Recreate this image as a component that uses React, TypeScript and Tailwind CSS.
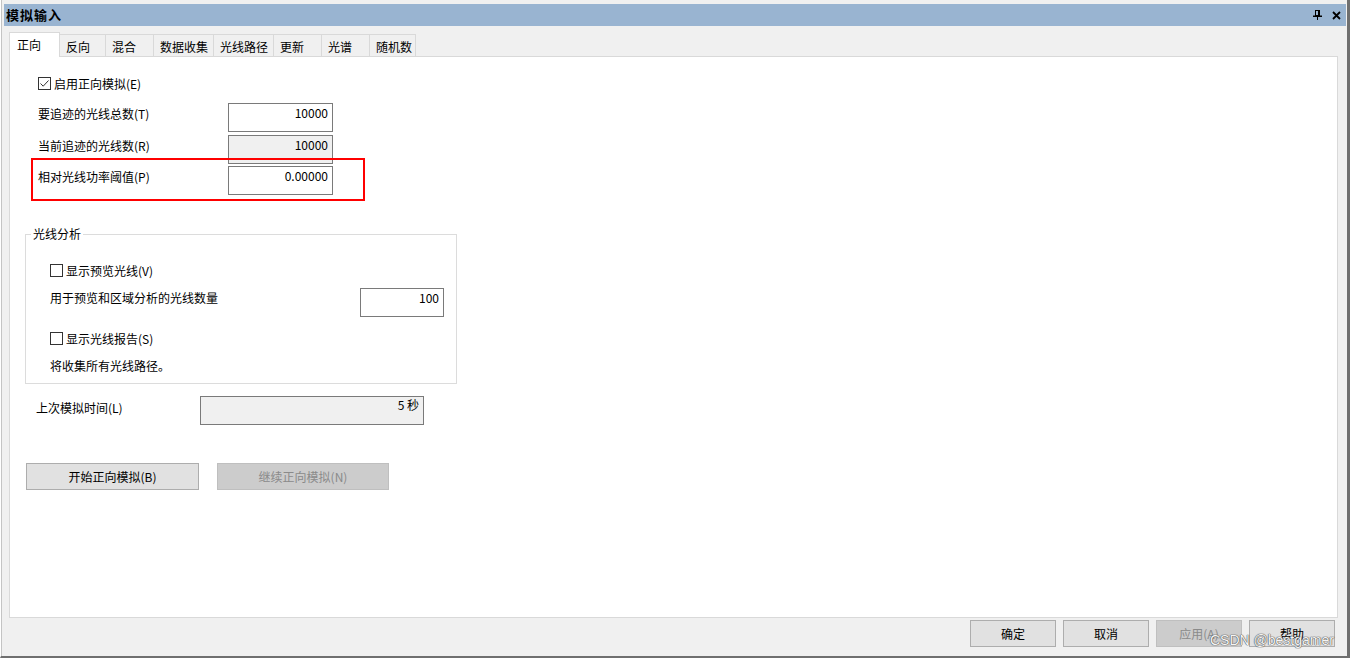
import React from 'react';

const tabs = [
  { label: '正向', w: 'w-[51px]' },
  { label: '反向', w: 'w-[46px]' },
  { label: '混合', w: 'w-[48px]' },
  { label: '数据收集', w: 'w-[60px]' },
  { label: '光线路径', w: 'w-[60px]' },
  { label: '更新', w: 'w-[48px]' },
  { label: '光谱', w: 'w-[48px]' },
  { label: '随机数', w: 'w-[46px]' },
];

function CheckBox({ checked = false }: { checked?: boolean }) {
  return (
    <span className="flex h-[13px] w-[13px] shrink-0 items-center justify-center border border-[#333333] bg-white">
      {checked && (
        <svg width="11" height="11" viewBox="0 0 11 11">
          <path d="M1.5 5.5 L4.2 8.2 L9.5 2.5" fill="none" stroke="#333333" strokeWidth="1" />
        </svg>
      )}
    </span>
  );
}

function NumBox({ value, w, readOnly = false }: { value: string; w: string; readOnly?: boolean }) {
  return (
    <div
      className={`${w} h-[29px] border border-[#7a7a7a] pr-[4px] pt-[1px] text-right leading-[16px] ${
        readOnly ? 'bg-[#f0f0f0]' : 'bg-white'
      }`}
    >
      {value}
    </div>
  );
}

function Row({ label, value, readOnly, className = '' }: { label: string; value: string; readOnly?: boolean; className?: string }) {
  return (
    <div className={`flex h-[29px] ${className}`}>
      <div className="w-[190px] pt-[3px] leading-[16px]">{label}</div>
      <NumBox value={value} w="w-[105px]" readOnly={readOnly} />
    </div>
  );
}

function PinIcon() {
  return (
    <svg width="10" height="10" viewBox="0 0 10 10">
      <rect x="2.5" y="0.5" width="4" height="5" fill="none" stroke="#000" strokeWidth="1" />
      <rect x="5" y="0" width="1.5" height="6" fill="#000" />
      <rect x="0" y="5.5" width="9" height="1.5" fill="#000" />
      <rect x="4" y="6.5" width="1" height="3.5" fill="#000" />
    </svg>
  );
}

function CloseIcon() {
  return (
    <svg width="9" height="9" viewBox="0 0 9 9">
      <path d="M1 1 L8 8 M8 1 L1 8" stroke="#000" strokeWidth="1.8" />
    </svg>
  );
}

export default function App() {
  return (
    <div className="relative h-[658px] w-[1350px] overflow-hidden border-b-2 border-l border-r-[3px] border-b-[#6f6f6f] border-l-white border-r-[#6f6f6f] bg-[#f0f0f0] font-['Noto_Sans_CJK_SC','Noto_Sans',sans-serif] text-[12px] text-black">
      <div className="flex h-full flex-col border-l border-[#c4c4c4] pt-[4px]">
        {/* title bar */}
        <div className="ml-[2px] mr-[1px] flex h-[22px] items-center justify-between bg-[#99b4d1] pl-[2px] pr-[5px]">
          <span className="text-[13px] font-bold tracking-[1px] leading-[16px]">模拟输入</span>
          <div className="flex items-center gap-[9px]">
            <PinIcon />
            <CloseIcon />
          </div>
        </div>

        {/* tabs */}
        <div className="mt-[6px] flex h-[25px] items-end pl-[7px]">
          {tabs.map((t, i) =>
            i === 0 ? (
              <div
                key={t.label}
                className={`${t.w} relative z-10 h-[25px] border border-b-0 border-[#d9d9d9] bg-white pl-[7px] pt-[4px] leading-[16px]`}
              >
                {t.label}
              </div>
            ) : (
              <div
                key={t.label}
                className={`${t.w} h-[23px] border-r border-t border-[#d9d9d9] bg-[#f0f0f0] pl-[6px] pt-[4px] leading-[16px]`}
              >
                {t.label}
              </div>
            )
          )}
        </div>

        {/* panel */}
        <div className="relative -mt-px ml-[7px] flex h-[562px] w-[1329px] flex-col border border-[#d9d9d9] bg-white">
          <div className="ml-[28px] mt-[20px] flex h-[13px] items-center gap-[3px]">
            <CheckBox checked />
            <span className="leading-[16px]">启用正向模拟(E)</span>
          </div>

          <div className="ml-[28px] mt-[13px] flex flex-col">
            <Row label="要追迹的光线总数(T)" value="10000" />
            <Row label="当前追迹的光线数(R)" value="10000" readOnly className="mt-[3px]" />
            <Row label="相对光线功率阈值(P)" value="0.00000" className="mt-[2px]" />
          </div>

          <fieldset className="ml-[15px] mt-[31px] h-[158px] w-[432px] border border-[#dcdcdc]">
            <legend className="ml-[5px] px-[2px] leading-[16px]">光线分析</legend>
            <div className="pl-[24px]">
              <div className="mt-[22px] flex h-[13px] items-center gap-[3px]">
                <CheckBox />
                <span className="leading-[16px]">显示预览光线(V)</span>
              </div>
              <div className="mt-[11px] flex h-[29px]">
                <div className="w-[310px] pt-[2px] leading-[16px]">用于预览和区域分析的光线数量</div>
                <NumBox value="100" w="w-[84px]" />
              </div>
              <div className="mt-[15px] flex h-[13px] items-center gap-[3px]">
                <CheckBox />
                <span className="leading-[16px]">显示光线报告(S)</span>
              </div>
              <div className="mt-[13px] leading-[16px]">将收集所有光线路径。</div>
            </div>
          </fieldset>

          <div className="ml-[26px] mt-[12px] flex h-[29px]">
            <div className="w-[164px] pt-[4px] leading-[16px]">上次模拟时间(L)</div>
            <div className="h-[29px] w-[224px] border border-[#7a7a7a] bg-[#f0f0f0] pr-[4px] text-right leading-[16px]">
              5 秒
            </div>
          </div>

          <div className="ml-[16px] mt-[38px] flex gap-[18px]">
            <button className="flex h-[27px] w-[173px] items-center justify-center border border-[#adadad] bg-[#e1e1e1] leading-[16px]">
              开始正向模拟(B)
            </button>
            <button className="flex h-[27px] w-[172px] items-center justify-center border border-[#bfbfbf] bg-[#cccccc] leading-[16px] text-[#8a8a8a]">
              继续正向模拟(N)
            </button>
          </div>

          {/* red annotation frame */}
          <div className="absolute left-[21px] top-[101px] h-[43px] w-[334px] border-2 border-[#ff0000]" />
        </div>

        {/* bottom buttons */}
        <div className="mt-[2px] flex h-[27px] justify-end gap-[7px] pr-[12px]">
          <button className="flex h-[27px] w-[86px] items-center justify-center border border-[#adadad] bg-[#e1e1e1] leading-[16px]">
            确定
          </button>
          <button className="flex h-[27px] w-[86px] items-center justify-center border border-[#adadad] bg-[#e1e1e1] leading-[16px]">
            取消
          </button>
          <button className="flex h-[27px] w-[86px] items-center justify-center border border-[#bfbfbf] bg-[#cccccc] leading-[16px] text-[#8a8a8a]">
            应用(A)
          </button>
          <button className="flex h-[27px] w-[86px] items-center justify-center border border-[#adadad] bg-[#e1e1e1] leading-[16px]">
            帮助
          </button>
        </div>
      </div>

      {/* watermark */}
      <div className="absolute left-[1209px] top-[631px] font-['Liberation_Sans',sans-serif] text-[14px] leading-[18px] text-[#f4f4f4] [text-shadow:0_0_1px_#555555,0_0_1px_#555555,0_0_1px_#555555]">
        CSDN @bestgamer
      </div>
    </div>
  );
}
